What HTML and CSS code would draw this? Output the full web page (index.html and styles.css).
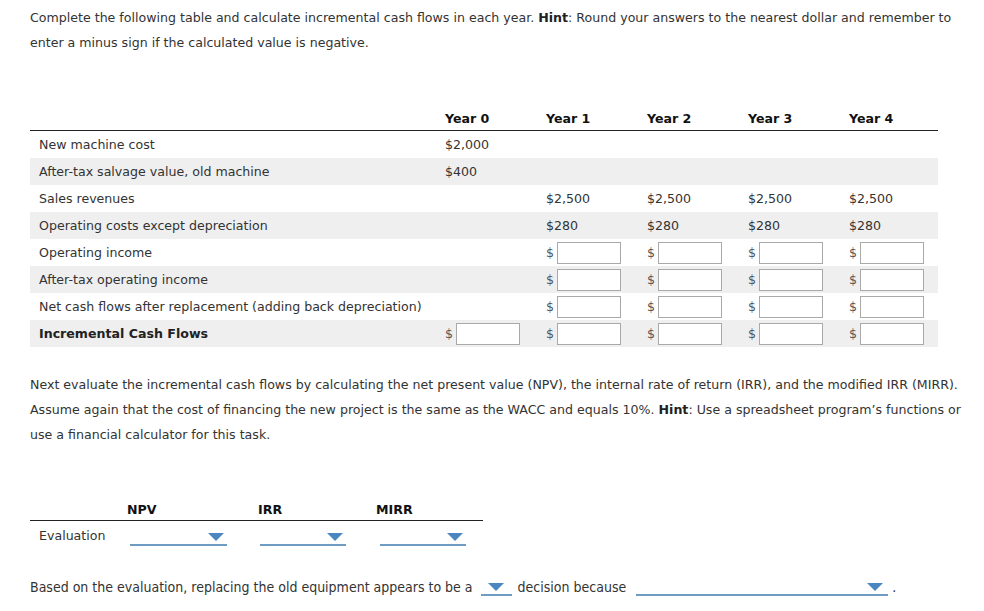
FILE: index.html
```html
<!DOCTYPE html>
<html>
<head>
<meta charset="utf-8">
<link rel="stylesheet" href="styles.css">
</head>
<body>
<div class="page">
  <p class="para intro">Complete the following table and calculate incremental cash flows in each year. <b>Hint</b>: Round your answers to the nearest dollar and remember to enter a minus sign if the calculated value is negative.</p>

  <div class="cf-table">
    <div class="row head">
      <div class="label"></div>
      <div class="cell">Year 0</div>
      <div class="cell">Year 1</div>
      <div class="cell">Year 2</div>
      <div class="cell">Year 3</div>
      <div class="cell">Year 4</div>
    </div>
    <div class="row">
      <div class="label">New machine cost</div>
      <div class="cell">$2,000</div>
      <div class="cell"></div><div class="cell"></div><div class="cell"></div><div class="cell"></div>
    </div>
    <div class="row alt">
      <div class="label">After-tax salvage value, old machine</div>
      <div class="cell">$400</div>
      <div class="cell"></div><div class="cell"></div><div class="cell"></div><div class="cell"></div>
    </div>
    <div class="row">
      <div class="label">Sales revenues</div>
      <div class="cell"></div>
      <div class="cell">$2,500</div><div class="cell">$2,500</div><div class="cell">$2,500</div><div class="cell">$2,500</div>
    </div>
    <div class="row alt">
      <div class="label">Operating costs except depreciation</div>
      <div class="cell"></div>
      <div class="cell">$280</div><div class="cell">$280</div><div class="cell">$280</div><div class="cell">$280</div>
    </div>
    <div class="row">
      <div class="label">Operating income</div>
      <div class="cell"></div>
      <div class="cell"><span class="cur">$</span><span class="box"></span></div>
      <div class="cell"><span class="cur">$</span><span class="box"></span></div>
      <div class="cell"><span class="cur">$</span><span class="box"></span></div>
      <div class="cell"><span class="cur">$</span><span class="box"></span></div>
    </div>
    <div class="row alt">
      <div class="label">After-tax operating income</div>
      <div class="cell"></div>
      <div class="cell"><span class="cur">$</span><span class="box"></span></div>
      <div class="cell"><span class="cur">$</span><span class="box"></span></div>
      <div class="cell"><span class="cur">$</span><span class="box"></span></div>
      <div class="cell"><span class="cur">$</span><span class="box"></span></div>
    </div>
    <div class="row">
      <div class="label">Net cash flows after replacement (adding back depreciation)</div>
      <div class="cell"></div>
      <div class="cell"><span class="cur">$</span><span class="box"></span></div>
      <div class="cell"><span class="cur">$</span><span class="box"></span></div>
      <div class="cell"><span class="cur">$</span><span class="box"></span></div>
      <div class="cell"><span class="cur">$</span><span class="box"></span></div>
    </div>
    <div class="row alt">
      <div class="label strong">Incremental Cash Flows</div>
      <div class="cell"><span class="cur">$</span><span class="box"></span></div>
      <div class="cell"><span class="cur">$</span><span class="box"></span></div>
      <div class="cell"><span class="cur">$</span><span class="box"></span></div>
      <div class="cell"><span class="cur">$</span><span class="box"></span></div>
      <div class="cell"><span class="cur">$</span><span class="box"></span></div>
    </div>
  </div>

  <p class="para next">Next evaluate the incremental cash flows by calculating the net present value (NPV), the internal rate of return (IRR), and the modified IRR (MIRR). Assume again that the cost of financing the new project is the same as the WACC and equals 10%. <b>Hint</b>: Use a spreadsheet program’s functions or use a financial calculator for this task.</p>

  <div class="eval-table">
    <div class="erow ehead">
      <div class="elabel"></div>
      <div class="ecol c1">NPV</div>
      <div class="ecol c2">IRR</div>
      <div class="ecol c3">MIRR</div>
    </div>
    <div class="erow">
      <div class="elabel">Evaluation</div>
      <div class="ecol c1"><span class="dd w97"><span class="tri"></span></span></div>
      <div class="ecol c2"><span class="dd w86"><span class="tri"></span></span></div>
      <div class="ecol c3"><span class="dd w86"><span class="tri"></span></span></div>
    </div>
  </div>

  <p class="conclusion">Based on the evaluation, replacing the old equipment appears to be a <span class="dd small"><span class="tri"></span></span> decision because <span class="dd wide"><span class="tri"></span></span> .</p>
</div>
</body>
</html>
```

FILE: styles.css
```css
html, body {
  margin: 0;
  padding: 0;
  background: #ffffff;
}

.page {
  padding: 5px 0 0 30px;
  font-family: "DejaVu Sans", Verdana, sans-serif;
  font-size: 12.6px;
  color: #333333;
}

.para {
  margin: 0;
  line-height: 25px;
  width: 945px;
}

.para b {
  color: #222;
}

.intro {
  margin-bottom: 52px;
}

.cf-table {
  width: 908px;
}

.row {
  display: grid;
  grid-template-columns: 410px 101px 101px 101px 101px 94px;
  height: 27px;
  align-items: center;
}

.row.alt {
  background: #efeff0;
}

.row.head {
  height: 23px;
  border-bottom: 1px solid #222;
  align-items: end;
}

.row.head .cell {
  font-weight: bold;
  color: #111;
  padding-bottom: 4px;
}

.label {
  padding-left: 9px;
  white-space: nowrap;
}

.label.strong {
  font-weight: bold;
  color: #222;
}

.cell {
  padding-left: 5px;
  display: flex;
  align-items: center;
  white-space: nowrap;
}

.cur {
  width: 11px;
  color: #555;
}

.box {
  display: inline-block;
  width: 62px;
  height: 20px;
  border: 1px solid #a9a9a9;
  background: #fff;
}

.next {
  margin-top: 25px;
  margin-bottom: 55px;
}

.eval-table {
  width: 453px;
}

.erow {
  display: grid;
  grid-template-columns: 90px 130px 120px 113px;
  align-items: center;
}

.ehead {
  height: 18px;
  border-bottom: 1px solid #222;
  align-items: start;
}

.ehead .ecol {
  font-weight: bold;
  color: #111;
  padding-left: 7px;
}

.ehead .c2 { padding-left: 8px; }
.ehead .c3 { padding-left: 6px; }

.erow .elabel {
  padding-left: 9px;
}

.erow:not(.ehead) {
  height: 28px;
}

.erow:not(.ehead) .ecol {
  padding-left: 10px;
  padding-top: 6px;
}

.dd {
  display: inline-block;
  position: relative;
  height: 14px;
  border-bottom: 2px solid #6f9cc3;
  vertical-align: middle;
}

.w97 { width: 97px; }
.w86 { width: 86px; }

.tri {
  position: absolute;
  right: 3px;
  top: 3px;
  width: 0;
  height: 0;
  border-left: 8px solid transparent;
  border-right: 8px solid transparent;
  border-top: 8px solid #4a87c0;
}

.conclusion {
  margin: 28px 0 0 0;
  font-family: "DejaVu Sans Condensed", "DejaVu Sans", sans-serif;
  font-stretch: condensed;
  font-size: 14px;
  color: #333;
  line-height: 20px;
}

.dd.small {
  width: 31px;
  margin: 0 2px 0 4px;
}

.dd.small .tri {
  right: 8px;
}

.dd.wide {
  width: 252px;
  margin-left: 6px;
}

.dd.wide .tri {
  right: 5px;
}
```
